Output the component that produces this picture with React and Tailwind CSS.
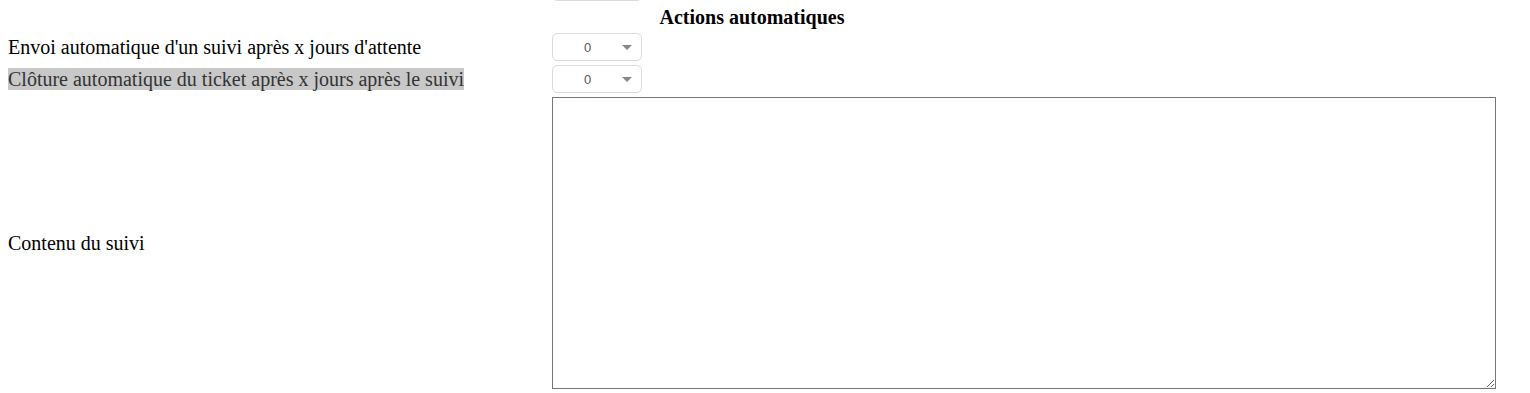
import React from 'react';

function FakeSelect({ value }) {
  return (
    <div className="relative flex h-[28px] w-[90px] items-center rounded-[5px] border border-[#dcdcdc] bg-white">
      <span className="ml-[31px] font-['Liberation_Sans',Arial,sans-serif] text-[13px] leading-none text-[#555]">
        {value}
      </span>
      <span className="absolute right-[9px] top-[11px] h-0 w-0 border-x-[5px] border-t-[5px] border-x-transparent border-t-[#888]"></span>
    </div>
  );
}

export default function App() {
  const rows = [
    { label: "Envoi automatique d'un suivi après x jours d'attente", value: '0', hover: false },
    { label: 'Clôture automatique du ticket après x jours après le suivi', value: '0', hover: true },
  ];

  return (
    <div className="h-[393px] overflow-hidden bg-white font-['Liberation_Serif','Times_New_Roman',serif] text-[20px] text-black">
      <div className="flex flex-col gap-[4px] px-[8px]">
        {/* row cut off at the top of the view, only the select's lower edge shows */}
        <div className="-mt-[27px] flex h-[28px] items-center">
          <div className="w-[544px] shrink-0"></div>
          <div className="h-[28px] w-[90px] rounded-[5px] border border-[#dcdcdc] bg-white"></div>
        </div>

        {/* Section heading */}
        <div className="flex h-[24px] w-[1488px] items-center justify-center">
          <span className="font-bold leading-[23px]">Actions automatiques</span>
        </div>

        {rows.map((row) => (
          <div key={row.label} className="flex h-[28px] items-center">
            <div className="w-[544px] shrink-0">
              <span className={row.hover ? 'bg-[#c8c8c8] leading-[23px] text-[#333]' : 'leading-[23px]'}>
                {row.label}
              </span>
            </div>
            <FakeSelect value={row.value} />
          </div>
        ))}

        {/* Follow-up content */}
        <div className="flex h-[292px] items-center">
          <div className="w-[544px] shrink-0 leading-[23px]">Contenu du suivi</div>
          <textarea className="h-[292px] w-[944px] resize border border-[#767676] bg-white p-[2px] outline-none"></textarea>
        </div>
      </div>
    </div>
  );
}
